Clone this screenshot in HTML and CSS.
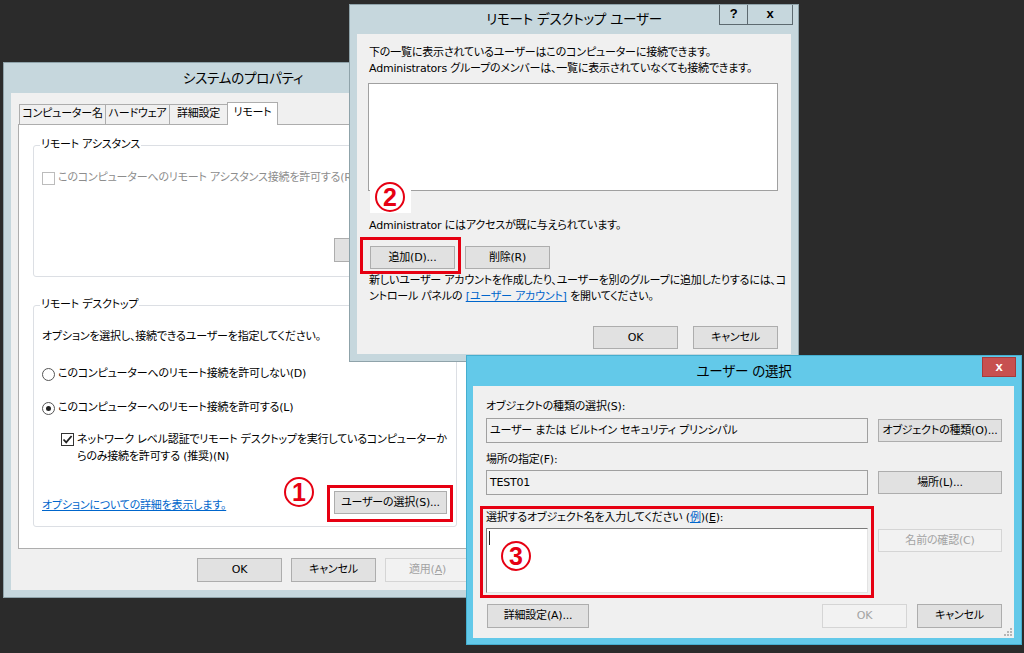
FILE: index.html
```html
<!DOCTYPE html>
<html lang="ja">
<head>
    <meta charset="UTF-8">
    <meta name="viewport" content="width=device-width, initial-scale=1.0">
    <title>リモート デスクトップ ユーザーの追加</title>
    <link rel="stylesheet" href="styles.css">
</head>
<body>
    <div class="desk">

        <!-- システムのプロパティ -->
        <section class="win win_sys">
            <div class="win_title">
                <span></span>
                <span class="title_text">システムのプロパティ</span>
                <span></span>
            </div>
            <div class="win_body">
                <div class="tabs">
                    <span class="tab tab_1">コンピューター名</span>
                    <span class="tab tab_2">ハードウェア</span>
                    <span class="tab tab_3">詳細設定</span>
                    <span class="tab tab_4 tab_on">リモート</span>
                </div>
                <div class="tab_panel">
                    <fieldset class="group group_assist">
                        <legend>リモート アシスタンス</legend>
                        <div class="opt is_off">
                            <span class="box"></span>
                            <span>このコンピューターへのリモート アシスタンス接続を許可する(R)</span>
                        </div>
                        <div class="group_btns">
                            <div class="btn btn_wide">詳細設定(V)...</div>
                        </div>
                    </fieldset>
                    <fieldset class="group group_rd">
                        <legend>リモート デスクトップ</legend>
                        <p class="lead">オプションを選択し、接続できるユーザーを指定してください。</p>
                        <div class="opt opt_radio1">
                            <span class="radio"></span>
                            <span>このコンピューターへのリモート接続を許可しない(D)</span>
                        </div>
                        <div class="opt opt_radio2">
                            <span class="radio radio_on"></span>
                            <span>このコンピューターへのリモート接続を許可する(L)</span>
                        </div>
                        <div class="opt opt_nla">
                            <span class="box">
                                <svg width="11" height="11" viewBox="0 0 11 11"><path d="M1.5 5.5 L4.2 8.3 L9.6 2" fill="none" stroke="#222" stroke-width="1.8"/></svg>
                            </span>
                            <span>ネットワーク レベル認証でリモート デスクトップを実行しているコンピューターか<br>らのみ接続を許可する (推奨)(N)</span>
                        </div>
                        <div class="rd_foot">
                            <a class="link">オプションについての詳細を表示します。</a>
                            <div class="btn btn_wide">ユーザーの選択(S)...</div>
                        </div>
                    </fieldset>
                </div>
                <div class="btn_row sys_btns">
                    <div class="btn">OK</div>
                    <div class="btn">キャンセル</div>
                    <div class="btn is_off">適用(<u>A</u>)</div>
                </div>
            </div>
        </section>

        <!-- リモート デスクトップ ユーザー -->
        <section class="win win_users">
            <div class="win_title">
                <span></span>
                <span class="title_text">リモート デスクトップ ユーザー</span>
                <span class="caption_btns">
                    <span class="cap cap_help">?</span>
                    <span class="cap cap_close">x</span>
                </span>
            </div>
            <div class="win_body users_body">
                <p class="txt">下の一覧に表示されているユーザーはこのコンピューターに接続できます。</p>
                <p class="txt">Administrators グループのメンバーは、一覧に表示されていなくても接続できます。</p>
                <div class="user_list"></div>
                <p class="txt admin_txt">Administrator にはアクセスが既に与えられています。</p>
                <div class="btn_row users_btns">
                    <div class="btn">追加(D)...</div>
                    <div class="btn">削除(R)</div>
                </div>
                <p class="txt note">新しいユーザー アカウントを作成したり、ユーザーを別のグループに追加したりするには、コ<br>ントロール パネルの <a class="link">[ユーザー アカウント]</a> を開いてください。</p>
                <div class="btn_row users_ok">
                    <div class="btn">OK</div>
                    <div class="btn">キャンセル</div>
                </div>
            </div>
        </section>

        <!-- ユーザー の選択 -->
        <section class="win win_select">
            <div class="win_title">
                <span></span>
                <span class="title_text">ユーザー の選択</span>
                <span class="caption_btns">
                    <span class="cap cap_red">x</span>
                </span>
            </div>
            <div class="win_body select_body">
                <p class="txt">オブジェクトの種類の選択(S):</p>
                <div class="field_row">
                    <div class="field">ユーザー または ビルトイン セキュリティ プリンシパル</div>
                    <div class="btn btn_side">オブジェクトの種類(O)...</div>
                </div>
                <p class="txt label_2">場所の指定(F):</p>
                <div class="field_row">
                    <div class="field">TEST01</div>
                    <div class="btn btn_side">場所(L)...</div>
                </div>
                <p class="txt label_3">選択するオブジェクト名を入力してください (<a class="link">例</a>)(<u>E</u>):</p>
                <div class="field_row field_row_top">
                    <div class="names"><span class="caret"></span></div>
                    <div class="btn btn_side is_off">名前の確認(C)</div>
                </div>
                <div class="select_foot">
                    <div class="btn btn_adv">詳細設定(A)...</div>
                    <div class="btn is_off">OK</div>
                    <div class="btn">キャンセル</div>
                </div>
                <svg class="grip" width="8" height="8" viewBox="0 0 8 8">
                    <rect x="6" y="0" width="2" height="2" fill="#b5b5b5"/>
                    <rect x="3" y="3" width="2" height="2" fill="#b5b5b5"/>
                    <rect x="6" y="3" width="2" height="2" fill="#b5b5b5"/>
                    <rect x="0" y="6" width="2" height="2" fill="#b5b5b5"/>
                    <rect x="3" y="6" width="2" height="2" fill="#b5b5b5"/>
                    <rect x="6" y="6" width="2" height="2" fill="#b5b5b5"/>
                </svg>
            </div>
        </section>

        <!-- 注釈 -->
        <div class="mark mark_1"></div>
        <div class="mark mark_2"></div>
        <div class="mark mark_3"></div>
        <div class="num num_1">1</div>
        <div class="num_bg"><div class="num num_2">2</div></div>
        <div class="num num_3">3</div>
    </div>
</body>
</html>
```

FILE: styles.css
```css
*{
    margin: 0;
    padding: 0;
    box-sizing: border-box;
}
body{
    background: #2b2b2b;
    font-family: "DejaVu Sans", "Noto Sans CJK JP", sans-serif;
    font-size: 11px;
    letter-spacing: -0.2px;
    color: #000;
    font-feature-settings: "palt";
}
.desk{
    position: relative;
    width: 1024px;
    height: 653px;
    overflow: hidden;
}
u{
    text-decoration: underline;
}
.link{
    color: #0066cc;
    text-decoration: underline;
}
.txt{
    line-height: 16px;
    white-space: nowrap;
}

/* windows */
.win{
    position: absolute;
    display: flex;
    flex-direction: column;
    background: #c6d7dd;
    border: 1px solid #8fa3aa;
}
.win_title{
    display: grid;
    grid-template-columns: 1fr auto 1fr;
    height: 30px;
}
.title_text{
    font-size: 13.5px;
    line-height: 30px;
    white-space: nowrap;
}
.win_body{
    flex: 1;
    margin: 0 7px 7px;
    background: #f0f0f0;
    position: relative;
}
.caption_btns{
    justify-self: end;
    align-self: start;
    display: flex;
    margin-right: 5px;
}
.cap{
    height: 20px;
    line-height: 17px;
    text-align: center;
    font-family: "Liberation Sans", sans-serif;
    font-weight: 700;
    font-size: 13px;
    border: 1px solid #5d6a70;
    border-top: 0;
}
.cap_help{
    width: 29px;
}
.cap_close{
    width: 45px;
    border-left: 0;
}

/* buttons */
.btn{
    height: 23px;
    width: 85px;
    line-height: 21px;
    text-align: center;
    background: #e1e1e1;
    border: 1px solid #adadad;
    white-space: nowrap;
}
.btn.is_off{
    background: #f2f2f2;
    border-color: #d5d5d5;
    color: #a3a3a3;
}
.btn_wide{
    width: 113px;
}
.btn_row{
    display: flex;
}

/* system properties */
.win_sys{
    left: 3px;
    top: 62px;
    width: 480px;
    height: 536px;
}
.tabs{
    display: flex;
    height: 22px;
    margin: 9px 7px 0;
    padding-left: 1px;
}
.tab{
    height: 20px;
    margin-top: 2px;
    line-height: 18px;
    text-align: center;
    border: 1px solid #adadad;
    border-bottom: 0;
    margin-right: -1px;
    white-space: nowrap;
    background: #f0f0f0;
}
.tab_1{ width: 87px; }
.tab_2{ width: 65px; }
.tab_3{ width: 59px; }
.tab_4{ width: 51px; }
.tab_on{
    position: relative;
    z-index: 1;
    height: 23px;
    margin-top: 0;
    line-height: 20px;
    background: #fff;
}
.tab_panel{
    height: 425px;
    margin: 0 7px;
    padding: 0 10px 0 14px;
    background: #fff;
    border: 1px solid #adadad;
}
.group{
    min-width: 0;
    border: 1px solid #dcdfe4;
    border-radius: 3px;
    padding: 0 9px 0 8px;
}
.group legend{
    margin-left: -2px;
    padding: 0 1px;
    line-height: 16px;
}
.group_assist{
    margin-top: 12px;
    padding-top: 17px;
    padding-bottom: 14px;
}
.group_btns{
    display: flex;
    justify-content: flex-end;
    margin-top: 52px;
}
.group_btns .btn{
    height: 24px;
}
.group_rd{
    margin-top: 20px;
    padding-top: 16px;
    padding-bottom: 12px;
}
.lead{
    line-height: 16px;
    white-space: nowrap;
}
.opt{
    display: flex;
    align-items: center;
    gap: 3px;
    line-height: 16px;
    white-space: nowrap;
}
.opt.is_off{
    color: #8d8d8d;
}
.box{
    width: 13px;
    height: 13px;
    flex: none;
    display: flex;
    align-items: center;
    justify-content: center;
    border: 1px solid #333;
    background: #fff;
}
.is_off .box{
    border-color: #bcbcbc;
}
.radio{
    width: 13px;
    height: 13px;
    flex: none;
    border: 1px solid #555;
    border-radius: 50%;
    background: #fff;
    position: relative;
}
.radio_on::after{
    content: "";
    position: absolute;
    left: 3px;
    top: 3px;
    width: 5px;
    height: 5px;
    border-radius: 50%;
    background: #222;
}
.opt_radio1{
    margin-top: 21px;
}
.opt_radio2{
    margin-top: 18px;
}
.opt_nla{
    margin-top: 15px;
    margin-left: 19px;
    align-items: flex-start;
    line-height: 17px;
}
.opt_nla .box{
    margin-top: 2px;
}
.rd_foot{
    display: flex;
    justify-content: space-between;
    align-items: center;
    margin-top: 26px;
}
.rd_foot .link{
    margin-top: 3px;
}
.sys_btns{
    gap: 9px;
    margin-top: 9px;
    padding-left: 186px;
}
.sys_btns .btn{
    height: 24px;
    line-height: 22px;
}

/* remote desktop users */
.win_users{
    left: 349px;
    top: 4px;
    width: 450px;
    height: 358px;
}
.win_users .win_title{
    height: 29px;
}
.win_users .title_text{
    line-height: 28px;
}
.users_body{
    padding: 11px 13px 0 11px;
}
.users_body .txt{
    padding-left: 1px;
}
.user_list{
    height: 108px;
    margin-top: 6px;
    background: #fff;
    border: 1px solid #a0a0a0;
}
.admin_txt{
    margin-top: 27px;
}
.users_btns{
    gap: 10px;
    margin-top: 12px;
    padding-left: 2px;
}
.note{
    margin-top: 4px;
}
.users_ok{
    justify-content: flex-end;
    gap: 15px;
    margin-top: 21px;
}

/* select users */
.win_select{
    left: 466px;
    top: 355px;
    width: 556px;
    height: 290px;
    background: #63c9e9;
    border-color: #45aecf;
}
.win_select .win_body{
    margin: 0 7px 6px 6px;
}
.cap_red{
    width: 34px;
    margin-top: 1px;
    border: 1px solid #a83a3a;
    background: #c75050;
    color: #fff;
}
.select_body{
    padding: 13px 12px 0 13px;
}
.field_row{
    display: flex;
    align-items: center;
    justify-content: space-between;
    margin-top: 3px;
}
.field_row_top{
    align-items: flex-start;
    margin-top: 2px;
}
.field{
    width: 382px;
    height: 25px;
    line-height: 23px;
    padding-left: 3px;
    border: 1px solid #a0a0a0;
    white-space: nowrap;
}
.btn_side{
    width: 124px;
}
.field_row_top .btn_side{
    margin-top: 1px;
}
.label_2{
    margin-top: 9px;
}
.label_2 + .field_row{
    margin-top: 2px;
}
.label_3{
    margin-top: 15px;
}
.names{
    width: 382px;
    height: 65px;
    background: #fff;
    border: 1px solid;
    border-color: #7a7a7a #e3e3e3 #e3e3e3 #7a7a7a;
    padding: 2px 0 0 2px;
}
.caret{
    display: block;
    width: 1px;
    height: 14px;
    background: #222;
}
.select_foot{
    display: flex;
    gap: 10px;
    margin-top: 11px;
}
.select_foot .btn{
    height: 24px;
    line-height: 22px;
}
.btn_adv{
    width: 102px;
    margin-left: 1px;
    margin-right: auto;
}
.grip{
    position: absolute;
    right: 2px;
    bottom: 2px;
}

/* annotations */
.mark{
    position: absolute;
    border: 3px solid #e60012;
    z-index: 5;
}
.mark_1{
    left: 327px;
    top: 485px;
    width: 126px;
    height: 37px;
}
.mark_2{
    left: 360px;
    top: 237px;
    width: 101px;
    height: 37px;
}
.mark_3{
    left: 480px;
    top: 506px;
    width: 394px;
    height: 92px;
}
.num{
    position: absolute;
    width: 30px;
    height: 30px;
    border: 2px solid #e60012;
    border-radius: 50%;
    color: #e60012;
    font-family: "Liberation Sans", sans-serif;
    font-weight: 700;
    font-size: 25px;
    line-height: 26px;
    letter-spacing: 0;
    text-align: center;
    z-index: 5;
}
.num_1{
    left: 284px;
    top: 477px;
}
.num_bg{
    position: absolute;
    left: 370px;
    top: 180px;
    width: 41px;
    height: 33px;
    background: #fff;
    z-index: 5;
}
.num_2{
    left: 5px;
    top: 2px;
}
.num_3{
    left: 501px;
    top: 541px;
}
```
